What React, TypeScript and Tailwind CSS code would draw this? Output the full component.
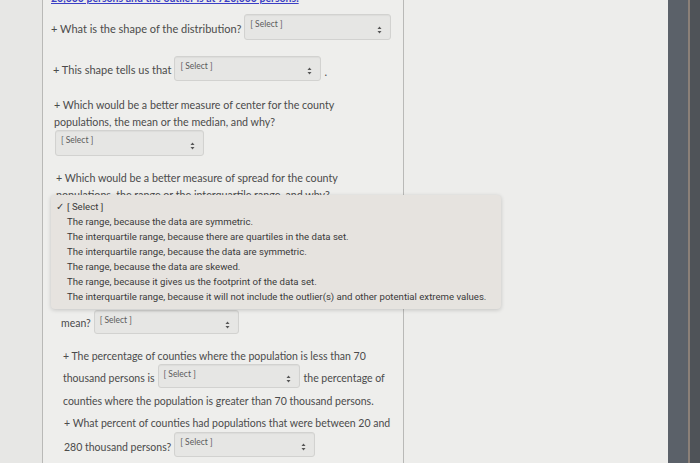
import React from "react";

const Arrows = () => (
  <svg width="5" height="8" viewBox="0 0 5 8" className="shrink-0">
    <path d="M2.5 0.5 L4.5 3 L0.5 3 Z" fill="#555" />
    <path d="M2.5 7.5 L4.5 5 L0.5 5 Z" fill="#555" />
  </svg>
);

const Select: React.FC<{ w: string; h?: string }> = ({ w, h = "h-[26px]" }) => (
  <div
    className={`${w} ${h} flex items-start justify-between rounded-[3px] border border-[#d2d2d0] bg-[#e6e6e4] pl-[5px] pr-[8px] pt-[5px] shadow-[inset_0_1px_1px_rgba(0,0,0,0.04)]`}
  >
    <span className="text-[8.5px] leading-none text-[#5a5a5a]">[ Select ]</span>
    <div className="self-center">
      <Arrows />
    </div>
  </div>
);

const options = [
  "The range, because the data are symmetric.",
  "The interquartile range, because there are quartiles in the data set.",
  "The interquartile range, because the data are symmetric.",
  "The range, because the data are skewed.",
  "The range, because it gives us the footprint of the data set.",
  "The interquartile range, because it will not include the outlier(s) and other potential extreme values.",
];

export default function App() {
  return (
    <div
      className="flex h-[463px] w-[700px] overflow-hidden bg-[#ebebe9] text-[#4b4b4b]"
      style={{ fontFamily: "Lato, 'Open Sans', sans-serif" }}
    >
      {/* left gutter */}
      <div className="w-[42px] shrink-0 bg-[#e7e7e5]" />

      {/* content panel */}
      <div className="relative w-[362px] shrink-0 border-x border-[#b9b9b7] bg-[#eeeeec] text-[10.5px]">
        <div className="h-[4px] overflow-hidden pl-[8px]">
          <div className="-mt-[9px] text-[10.5px] font-bold text-[#3b3fc4] underline">
            20,000 persons and the outlier is at 720,000 persons.
          </div>
        </div>

        {/* Q1 */}
        <div className="mt-[10px] flex h-[26px] items-center pl-[8px] text-[11px]">
          <span className="mr-[3px] pt-[4px]">+ What is the shape of the distribution?</span>
          <Select w="w-[147px]" />
        </div>

        {/* Q2 */}
        <div className="mt-[16px] flex h-[25px] items-center pl-[10px] text-[11px]">
          <span className="mr-[3px] pt-[4px]">+ This shape tells us that</span>
          <Select w="w-[147px]" h="h-[25px]" />
          <span className="ml-[3px] pt-[8px]">.</span>
        </div>

        {/* Q3 */}
        <div className="mt-[15px] pl-[11px] text-[10.7px] leading-[17px]">
          <div>+ Which would be a better measure of center for the county</div>
          <div>populations, the mean or the median, and why?</div>
        </div>
        <div className="pl-[12px]">
          <Select w="w-[149px]" />
        </div>

        {/* Q4 */}
        <div className="mt-[13px] pl-[13px] text-[10.7px] leading-[17px]">
          <div>+ Which would be a better measure of spread for the county</div>
          <div>populations, the range or the interquartile range, and why?</div>
        </div>

        {/* mean row (rest hidden by the open menu) */}
        <div className="mt-[107px] flex h-[24px] items-center pl-[18px]">
          <span className="mr-[3px] pt-[3px]">mean?</span>
          <Select w="w-[145px]" h="h-[24px]" />
        </div>

        {/* Q6 */}
        <div className="mt-[14px] pl-[20px] leading-[16px]">
          + The percentage of counties where the population is less than 70
        </div>
        <div className="flex h-[24px] items-center pl-[20px]">
          <span className="mr-[3px] pt-[6px]">thousand persons is</span>
          <Select w="w-[142px]" h="h-[24px]" />
          <span className="ml-[4px] pt-[6px]">the percentage of</span>
        </div>
        <div className="mt-[5px] pl-[20px] leading-[16px]">
          counties where the population is greater than 70 thousand persons.
        </div>

        {/* Q7 */}
        <div className="mt-[6px] pl-[21px] leading-[16px]">
          + What percent of counties had populations that were between 20 and
        </div>
        <div className="mt-[1px] flex h-[25px] items-center pl-[21px]">
          <span className="mr-[3px] pt-[6px]">280 thousand persons?</span>
          <Select w="w-[141px]" h="h-[25px]" />
        </div>

        {/* open select menu */}
        <div
          className="absolute left-[8px] top-[195px] z-10 w-[450px] rounded-[4px] bg-[#e6e3df] px-[5px] pb-[5px] pt-[5px] text-[#3a3a3a] shadow-[0_1px_4px_rgba(0,0,0,0.18)]"
          style={{ fontFamily: "Roboto, 'Noto Sans', sans-serif" }}
        >
          <div className="flex items-center text-[9.6px] leading-[14px]">
            <span className="w-[11px]">✓</span>
            <span>[ Select ]</span>
          </div>
          {options.map((o) => (
            <div key={o} className="pl-[11px] text-[9.6px] leading-[15px]">
              {o}
            </div>
          ))}
        </div>
      </div>

      {/* right area */}
      <div className="flex-1 bg-[#ededeb]" />

      {/* monitor bezel */}
      <div className="flex w-[32px] shrink-0">
        <div className="w-[20px] bg-[#5b6169]" />
        <div className="w-[2px] bg-[#8b8078]" />
        <div className="flex-1 bg-[#4f5358]" />
      </div>
    </div>
  );
}
